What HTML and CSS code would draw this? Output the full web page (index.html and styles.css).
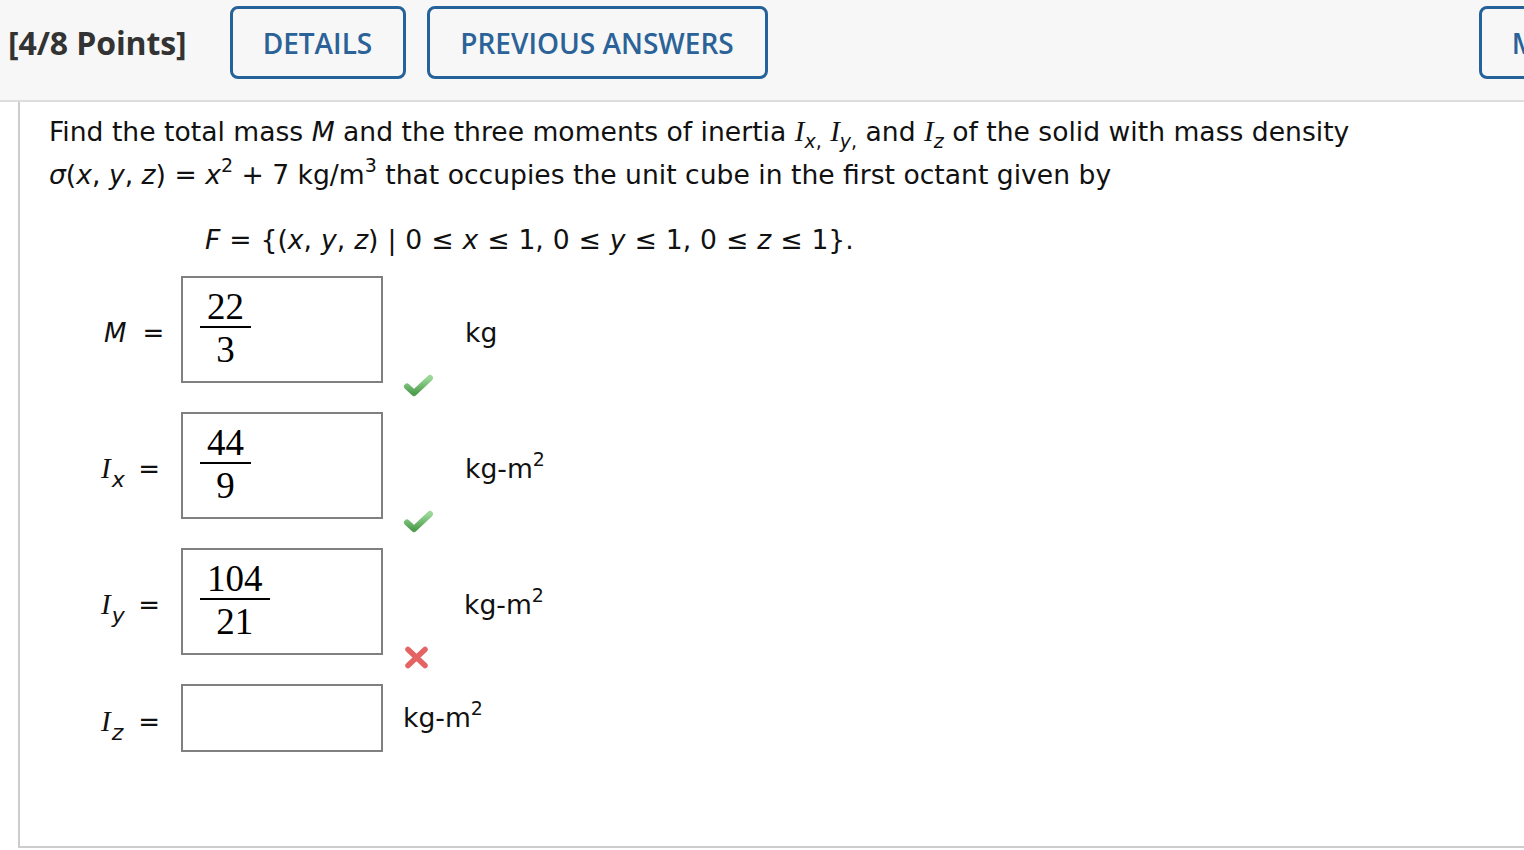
FILE: index.html
```html
<!DOCTYPE html>
<html>
<head>
<meta charset="utf-8">
<link rel="stylesheet" href="styles.css">
</head>
<body>
<header class="topbar">
  <div class="points">[4/8 Points]</div>
  <button class="btn">DETAILS</button>
  <button class="btn">PREVIOUS ANSWERS</button>
  <button class="btn btn-notes">MY NOTES</button>
</header>
<main class="panel">
  <p class="question">Find the total mass <i>M</i> and the three moments of inertia <span class="ii">I</span><sub><i>x</i>,</sub> <span class="ii">I</span><sub><i>y</i>,</sub> and <span class="ii">I</span><sub><i>z</i></sub> of the solid with mass density <i>σ</i>(<i>x</i>, <i>y</i>, <i>z</i>) = <i>x</i><sup>2</sup> + 7 kg/m<sup>3</sup> that occupies the unit cube in the first octant given by</p>
  <p class="formula"><i>F</i> = {(<i>x</i>, <i>y</i>, <i>z</i>) | 0 ≤ <i>x</i> ≤ 1, 0 ≤ <i>y</i> ≤ 1, 0 ≤ <i>z</i> ≤ 1}.</p>

  <div class="answers">
    <div class="row">
      <div class="label"><i>M</i><span class="eq">=</span></div>
      <div class="box"><span class="frac"><span class="num">22</span><span class="den">3</span></span></div>
      <div class="icon">
        <svg width="31" height="25" viewBox="0 0 31 25"><defs><linearGradient id="g1" x1="0" y1="0" x2="0" y2="1"><stop offset="0" stop-color="#9ad89a"/><stop offset="1" stop-color="#4f9f4f"/></linearGradient></defs><path d="M4 13.5 L11 20 L27 5" fill="none" stroke="url(#g1)" stroke-width="6" stroke-linecap="round" stroke-linejoin="round"/></svg>
      </div>
      <div class="unit">kg</div>
    </div>

    <div class="row">
      <div class="label"><span class="ii">I</span><sub class="lsub"><i>x</i></sub><span class="eq">=</span></div>
      <div class="box"><span class="frac"><span class="num">44</span><span class="den">9</span></span></div>
      <div class="icon">
        <svg width="31" height="25" viewBox="0 0 31 25"><defs><linearGradient id="g2" x1="0" y1="0" x2="0" y2="1"><stop offset="0" stop-color="#9ad89a"/><stop offset="1" stop-color="#4f9f4f"/></linearGradient></defs><path d="M4 13.5 L11 20 L27 5" fill="none" stroke="url(#g2)" stroke-width="6" stroke-linecap="round" stroke-linejoin="round"/></svg>
      </div>
      <div class="unit">kg-m<sup>2</sup></div>
    </div>

    <div class="row">
      <div class="label"><span class="ii">I</span><sub class="lsub"><i>y</i></sub><span class="eq">=</span></div>
      <div class="box"><span class="frac"><span class="num">104</span><span class="den">21</span></span></div>
      <div class="icon icon-x">
        <svg width="27" height="25" viewBox="0 0 27 25"><path d="M5 4.5 L22 20.5 M22 4.5 L5 20.5" fill="none" stroke="#e46464" stroke-width="5.5" stroke-linecap="round"/></svg>
      </div>
      <div class="unit">kg-m<sup>2</sup></div>
    </div>

    <div class="row">
      <div class="label"><span class="ii">I</span><sub class="lsub"><i>z</i></sub><span class="eq">=</span></div>
      <div class="box box-empty"></div>
      <div class="unit unit-plain">kg-m<sup>2</sup></div>
    </div>
  </div>
</main>
</body>
</html>
```
FILE: styles.css
```css
html, body {
  margin: 0;
  padding: 0;
  background: #ffffff;
  overflow: hidden;
  width: 1524px;
  height: 850px;
}

.topbar {
  height: 73px;
  padding: 6px 0 21px 8px;
  background: #f7f7f7;
  border-bottom: 2px solid #dddddd;
  display: flex;
  align-items: center;
  white-space: nowrap;
  overflow: hidden;
}

.points {
  font-family: "Open Sans", sans-serif;
  font-weight: 700;
  font-size: 32px;
  color: #333333;
  margin-right: 43px;
  letter-spacing: -0.1px;
}

.btn {
  height: 73px;
  box-sizing: border-box;
  border: 3px solid #26629a;
  border-radius: 8px;
  background: transparent;
  padding: 0 31px 0 30px;
  font-family: "Open Sans", sans-serif;
  font-weight: 600;
  font-size: 28px;
  color: #2b6297;
  margin-right: 21px;
  flex-shrink: 0;
  letter-spacing: 0;
}

.btn-notes {
  margin-left: 690px;
}

.panel {
  margin-left: 18px;
  height: 736px;
  border-left: 2px solid #cccccc;
  border-bottom: 2px solid #cccccc;
  padding: 8px 0 0 29px;
  font-family: "DejaVu Sans", Verdana, sans-serif;
  font-size: 26.6px;
  color: #111111;
}

.question {
  margin: 0;
  line-height: 43px;
  width: 1330px;
}

.question sup, .unit sup {
  font-size: 19px;
  line-height: 0;
  position: relative;
  vertical-align: baseline;
  top: -12px;
}

.question sub {
  font-size: 19px;
  line-height: 0;
  vertical-align: baseline;
  position: relative;
  top: 7px;
}

.ii {
  font-family: "Liberation Serif", serif;
  font-style: italic;
  font-size: 29px;
}

.formula {
  margin: 22px 0 0 156px;
  line-height: 43px;
  word-spacing: 0.5px;
}

.answers {
  margin: 15px 0 0 52px;
  display: flex;
  flex-direction: column;
  gap: 29px;
}

.row {
  display: flex;
  align-items: center;
}

.label {
  width: 80px;
  display: flex;
  align-items: baseline;
  font-size: 26px;
  margin-top: 6px;
}

.label > i {
  margin-left: 3px;
}

.lsub {
  font-size: 22px;
  position: relative;
  top: 9px;
  vertical-align: baseline;
  line-height: 0;
  margin-left: 1px;
}

.eq {
  margin-left: auto;
  margin-right: 21px;
}

.label > i + .eq {
  margin-left: 16px;
}

.box {
  width: 202px;
  height: 107px;
  box-sizing: border-box;
  border: 2px solid #808080;
  display: flex;
  align-items: center;
  padding-left: 17px;
}

.box-empty {
  height: 68px;
}

.frac {
  display: inline-flex;
  flex-direction: column;
  align-items: center;
  font-family: "Liberation Serif", serif;
  font-size: 37px;
  line-height: 37px;
  color: #000000;
  margin-top: -4px;
}

.num {
  padding: 0 7px 1px;
  border-bottom: 2px solid #000000;
}

.den {
  padding-top: 3px;
}

.icon {
  align-self: flex-end;
  margin: 0 31px -15px 20px;
  height: 25px;
  line-height: 0;
}

.icon-x {
  margin-right: 34px;
}

.unit {
  margin-top: 6px;
}

.unit-plain {
  margin-left: 20px;
  margin-top: -2px;
}
```
